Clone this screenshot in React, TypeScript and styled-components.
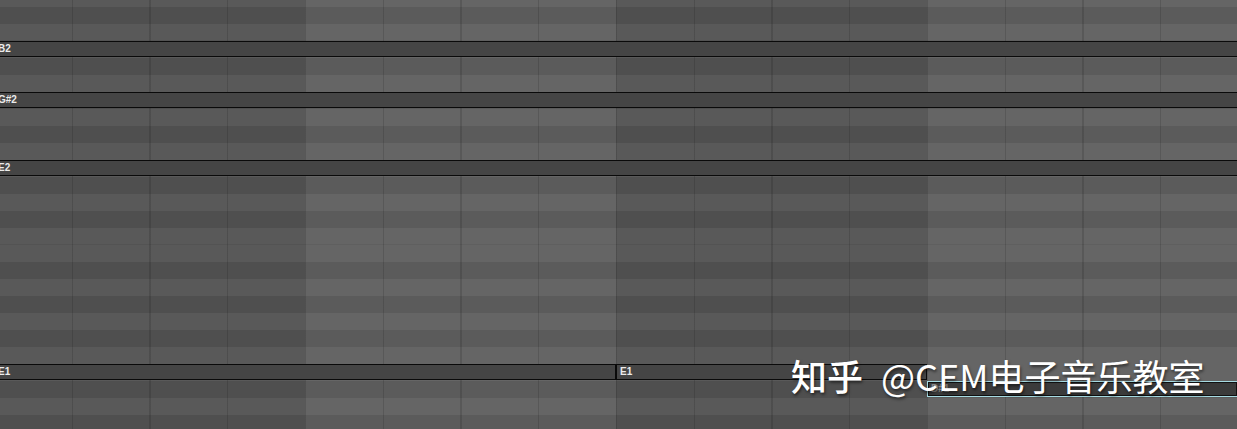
import React from 'react';
import styled, { createGlobalStyle, css } from 'styled-components';

const GlobalStyle = createGlobalStyle`
  html, body {
    margin: 0;
    padding: 0;
    background: #555555;
  }
`;

const LANE_H = 17;
const BEAT_W = 77.75;
const BAR_W = BEAT_W * 4;
const GRID_TOP = -10;
const GRID_LEFT = -6;

const lanes = ['D3', 'C#3', 'C3', 'B2', 'A#2', 'A2', 'G#2', 'G2', 'F#2', 'F2', 'E2', 'D#2', 'D2', 'C#2', 'C2', 'B1', 'A#1', 'A1', 'G#1', 'G1', 'F#1', 'F1', 'E1', 'D#1', 'D1', 'C#1'];

interface NoteData {
  pitch: string;
  start: number;
  len: number;
  selected?: boolean;
}

const notes: NoteData[] = [
  { pitch: 'B2', start: 0, len: 17 },
  { pitch: 'G#2', start: 0, len: 17 },
  { pitch: 'E2', start: 0, len: 17 },
  { pitch: 'E1', start: 0, len: 8 },
  { pitch: 'E1', start: 8, len: 4 },
  { pitch: 'D#1', start: 12, len: 4, selected: true },
];

const Roll = styled.div`
  position: relative;
  width: 1237px;
  height: 429px;
  overflow: hidden;
  background: #555555;
`;

const Lanes = styled.div`
  display: flex;
  flex-direction: column;
  margin-top: ${GRID_TOP}px;
  margin-left: ${GRID_LEFT}px;
`;

const Lane = styled.div<{ $octaveTop: boolean }>`
  display: flex;
  height: ${LANE_H}px;
  flex: none;
  position: relative;

  ${(p) =>
    p.$octaveTop &&
    css`
      &::after {
        content: '';
        position: absolute;
        left: 0;
        right: 0;
        bottom: 0;
        height: 1px;
        background: rgba(0, 0, 0, 0.06);
      }
    `}
`;

const barColors = {
  dark: { white: '#595959', black: '#4f4f4f' },
  light: { white: '#656565', black: '#5b5b5b' },
};

const BarCell = styled.div<{ $light: boolean; $black: boolean }>`
  flex: none;
  width: ${BAR_W}px;
  height: 100%;
  background-color: ${(p) => barColors[p.$light ? 'light' : 'dark'][p.$black ? 'black' : 'white']};
  background-image: repeating-linear-gradient(
    to right,
    rgba(0, 0, 0, 0.13) 0px,
    rgba(0, 0, 0, 0.13) 1px,
    transparent 1px,
    transparent ${BEAT_W}px
  );
`;

const Note = styled.div<{ $selected: boolean }>`
  position: absolute;
  box-sizing: border-box;
  height: 16px;
  display: flex;
  align-items: center;
  padding-left: 3px;
  background: ${(p) => (p.$selected ? '#3b3b3b' : '#454545')};
  border: 1px solid ${(p) => (p.$selected ? '#a6dbe3' : '#0a0a0a')};
  ${(p) =>
    p.$selected &&
    css`
      box-shadow: inset 0 0 0 1px #111111;
    `}
`;

const NoteLabel = styled.span<{ $selected: boolean }>`
  font-family: 'Liberation Sans', Arial, sans-serif;
  font-weight: bold;
  font-size: 10px;
  line-height: 10px;
  color: ${(p) => (p.$selected ? '#8a8a8a' : '#ececec')};
  white-space: nowrap;
`;

const Watermark = styled.div`
  position: absolute;
  left: 791px;
  top: 355px;
  display: flex;
  align-items: center;
  gap: 18px;
  font-family: 'Noto Sans CJK SC', 'Noto Sans', sans-serif;
  font-size: 36px;
  line-height: 40px;
  color: #ffffff;
  white-space: nowrap;
  text-shadow: 1px 2px 3px rgba(0, 0, 0, 0.55);
`;

const Logo = styled.span`
  font-weight: 500;
`;

const Handle = styled.span``;

const isBlack = (name: string) => name.includes('#');

function App() {
  return (
    <>
      <GlobalStyle />
      <Roll>
        <Lanes>
          {lanes.map((name) => (
            <Lane key={name} $octaveTop={name.startsWith('C') && !isBlack(name)}>
              {[0, 1, 2, 3].map((bar) => (
                <BarCell key={bar} $light={bar % 2 === 1} $black={isBlack(name)} />
              ))}
            </Lane>
          ))}
        </Lanes>
        {notes.map((n, i) => {
          const idx = lanes.indexOf(n.pitch);
          return (
            <Note
              key={i}
              $selected={!!n.selected}
              style={{
                top: GRID_TOP + idx * LANE_H,
                left: GRID_LEFT + n.start * BEAT_W,
                width: n.len * BEAT_W,
              }}
            >
              <NoteLabel $selected={!!n.selected}>{n.pitch}</NoteLabel>
            </Note>
          );
        })}
        <Watermark>
          <Logo>知乎</Logo>
          <Handle>@CEM电子音乐教室</Handle>
        </Watermark>
      </Roll>
    </>
  );
}

export default App;
